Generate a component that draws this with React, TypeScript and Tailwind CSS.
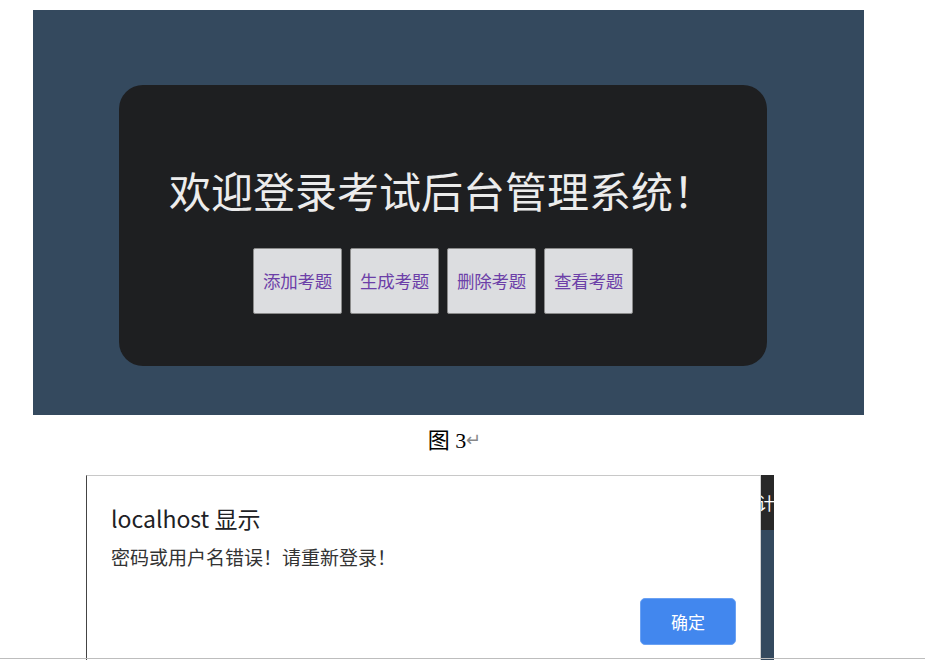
import React from "react";

const cjk = '"Noto Sans CJK SC", "Noto Sans", sans-serif';

export default function App() {
  const buttons = ["添加考题", "生成考题", "删除考题", "查看考题"];
  return (
    <div className="relative w-[925px] h-[660px] bg-white overflow-hidden" style={{ fontFamily: cjk }}>
      <div className="ml-[33px] mt-[10px] w-[831px] h-[405px] bg-[#34495e] pt-[75px] pl-[86px]">
        <div className="w-[648px] h-[281px] rounded-[24px] bg-[#1e1f21] flex flex-col items-center pt-[80px]">
          <h1 className="text-[42px] leading-[50px] text-[#ececec] font-normal pr-[2px]">欢迎登录考试后台管理系统！</h1>
          <div className="flex gap-[8px] mt-[33px]">
            {buttons.map((b) => (
              <div
                key={b}
                className="w-[89px] h-[66px] bg-[#dcdde0] border border-[#8a8a8a] rounded-[2px] flex items-center justify-center text-[17.5px] text-[#6c3fa8] tracking-[-0.3px]"
              >
                {b}
              </div>
            ))}
          </div>
        </div>
      </div>
      <div
        className="flex justify-center mt-[10px] h-[30px] items-center text-[22px] text-black"
        style={{ fontFamily: '"Liberation Serif", "Noto Sans CJK SC", serif' }}
      >
        <span className="mr-[16px] flex items-center">
          <span>图 3</span>
          <span className="text-[#888] text-[18px]">↵</span>
        </span>
      </div>
      <div className="flex mt-[20px] ml-[86px] h-[185px]">
        <div className="w-[675px] h-full bg-white border-l border-t border-r border-l-[#444] border-t-[#c8c8c8] border-r-[#d0d0d0] pl-[24px] pr-[24px] pt-[26px] flex flex-col">
          <div className="text-[23px] leading-[32px] text-[#202124]">localhost 显示</div>
          <div className="text-[19px] leading-[26px] text-[#333] mt-[10px]">密码或用户名错误！请重新登录！</div>
          <div className="flex justify-end mt-[28px]">
            <div className="w-[96px] h-[47px] rounded-[5px] bg-[#4287ee] border border-[#6aa1f3] text-white text-[17px] flex items-center justify-center">
              确定
            </div>
          </div>
        </div>
        <div className="w-[13px] h-full flex flex-col">
          <div className="h-[55px] bg-[#282828] text-white text-[17px] leading-[55px] overflow-hidden whitespace-nowrap">
            <span className="-ml-[3px]">计</span>
          </div>
          <div className="flex-1 bg-[#34495e]" />
        </div>
      </div>
      <div className="absolute left-0 right-0 bottom-[1px] h-[1px] bg-[#bdbdbd]" />
    </div>
  );
}
